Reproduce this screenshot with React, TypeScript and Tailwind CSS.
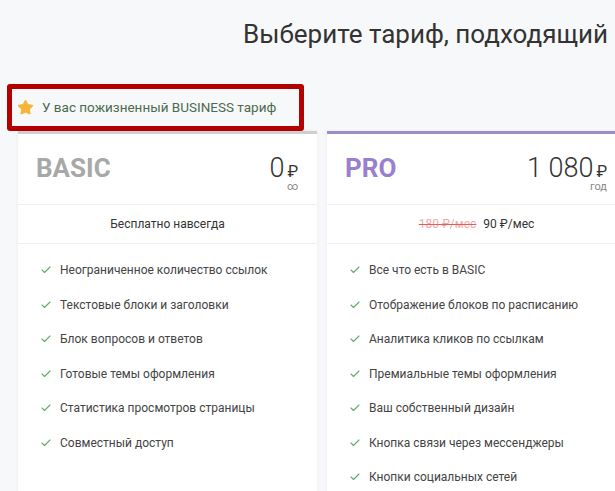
import React from 'react';
import { Check, Star } from 'lucide-react';

interface Plan {
  name: string;
  nameColor: string;
  topBorder: string;
  price: string;
  period: string;
  features: string[];
  note: React.ReactNode;
}

const plans: Plan[] = [
  {
    name: 'BASIC',
    nameColor: 'text-[#a8a8a8]',
    topBorder: 'border-t-[#cfcfcf]',
    price: '0',
    period: '∞',
    note: <span>Бесплатно навсегда</span>,
    features: [
      'Неограниченное количество ссылок',
      'Текстовые блоки и заголовки',
      'Блок вопросов и ответов',
      'Готовые темы оформления',
      'Статистика просмотров страницы',
      'Совместный доступ',
    ],
  },
  {
    name: 'PRO',
    nameColor: 'text-[#9a80cc]',
    topBorder: 'border-t-[#9d8bcb]',
    price: '1 080',
    period: 'год',
    note: (
      <span className="flex items-center gap-[7px]">
        <span className="text-[#f2a6a6] line-through decoration-[#e06060]">180 ₽/мес</span>
        <span>90 ₽/мес</span>
      </span>
    ),
    features: [
      'Все что есть в BASIC',
      'Отображение блоков по расписанию',
      'Аналитика кликов по ссылкам',
      'Премиальные темы оформления',
      'Ваш собственный дизайн',
      'Кнопка связи через мессенджеры',
      'Кнопки социальных сетей',
    ],
  },
];

const PlanCard = ({ plan }: { plan: Plan }) => (
  <div className={`w-[299px] flex-shrink-0 bg-white border-t-[3px] ${plan.topBorder} shadow-[0_0_4px_rgba(0,0,0,0.05)]`}>
    <div className="h-[70px] flex items-start justify-between pl-[18px] pr-[19px] pt-[21px]">
      <span className={`text-[26px] font-bold leading-none ${plan.nameColor}`}>{plan.name}</span>
      <div className="flex flex-col items-end">
        <div className="flex items-baseline">
          <span className="text-[27px] font-light leading-none text-[#333]">{plan.price}</span>
          <span className="ml-[3px] text-[16px] leading-none text-[#333]">₽</span>
        </div>
        <span className="-mt-[1px] text-[11px] leading-none text-[#888]">{plan.period}</span>
      </div>
    </div>
    <div className="h-[40px] flex items-center justify-center border-y border-[#efefef] text-[12px] text-[#333]">
      {plan.note}
    </div>
    <ul className="pt-[9px] pb-6 pl-[22px]">
      {plan.features.map(f => (
        <li key={f} className="h-[34.5px] flex items-center text-[12px] text-[#444]">
          <Check size={12} strokeWidth={2.2} className="text-[#5fae67] mr-[8px]" />
          <span>{f}</span>
        </li>
      ))}
    </ul>
  </div>
);

export default function App() {
  return (
    <div className="w-[615px] h-[491px] overflow-hidden bg-[#f7f8f9] font-['Roboto',sans-serif]">
      <h1 className="pt-[18px] pl-[243px] text-[26px] leading-[32px] font-normal text-[#333] whitespace-nowrap">
        Выберите тариф, подходящий
      </h1>

      <div className="mt-[34px] ml-[7px] w-[297px] h-[47px] border-[5px] border-[#b30000] rounded-[3px] bg-[#f7f8f9] flex items-center pl-[5px]">
        <Star size={17} fill="#f5b53a" stroke="#f5b53a" strokeWidth={1.5} className="flex-shrink-0" />
        <span className="ml-[8px] text-[13.5px] text-[#4b6b4f] whitespace-nowrap">У вас пожизненный BUSINESS тариф</span>
      </div>

      <div className="flex gap-[10px] pl-[18px]">
        {plans.map(p => (
          <PlanCard key={p.name} plan={p} />
        ))}
      </div>
    </div>
  );
}
